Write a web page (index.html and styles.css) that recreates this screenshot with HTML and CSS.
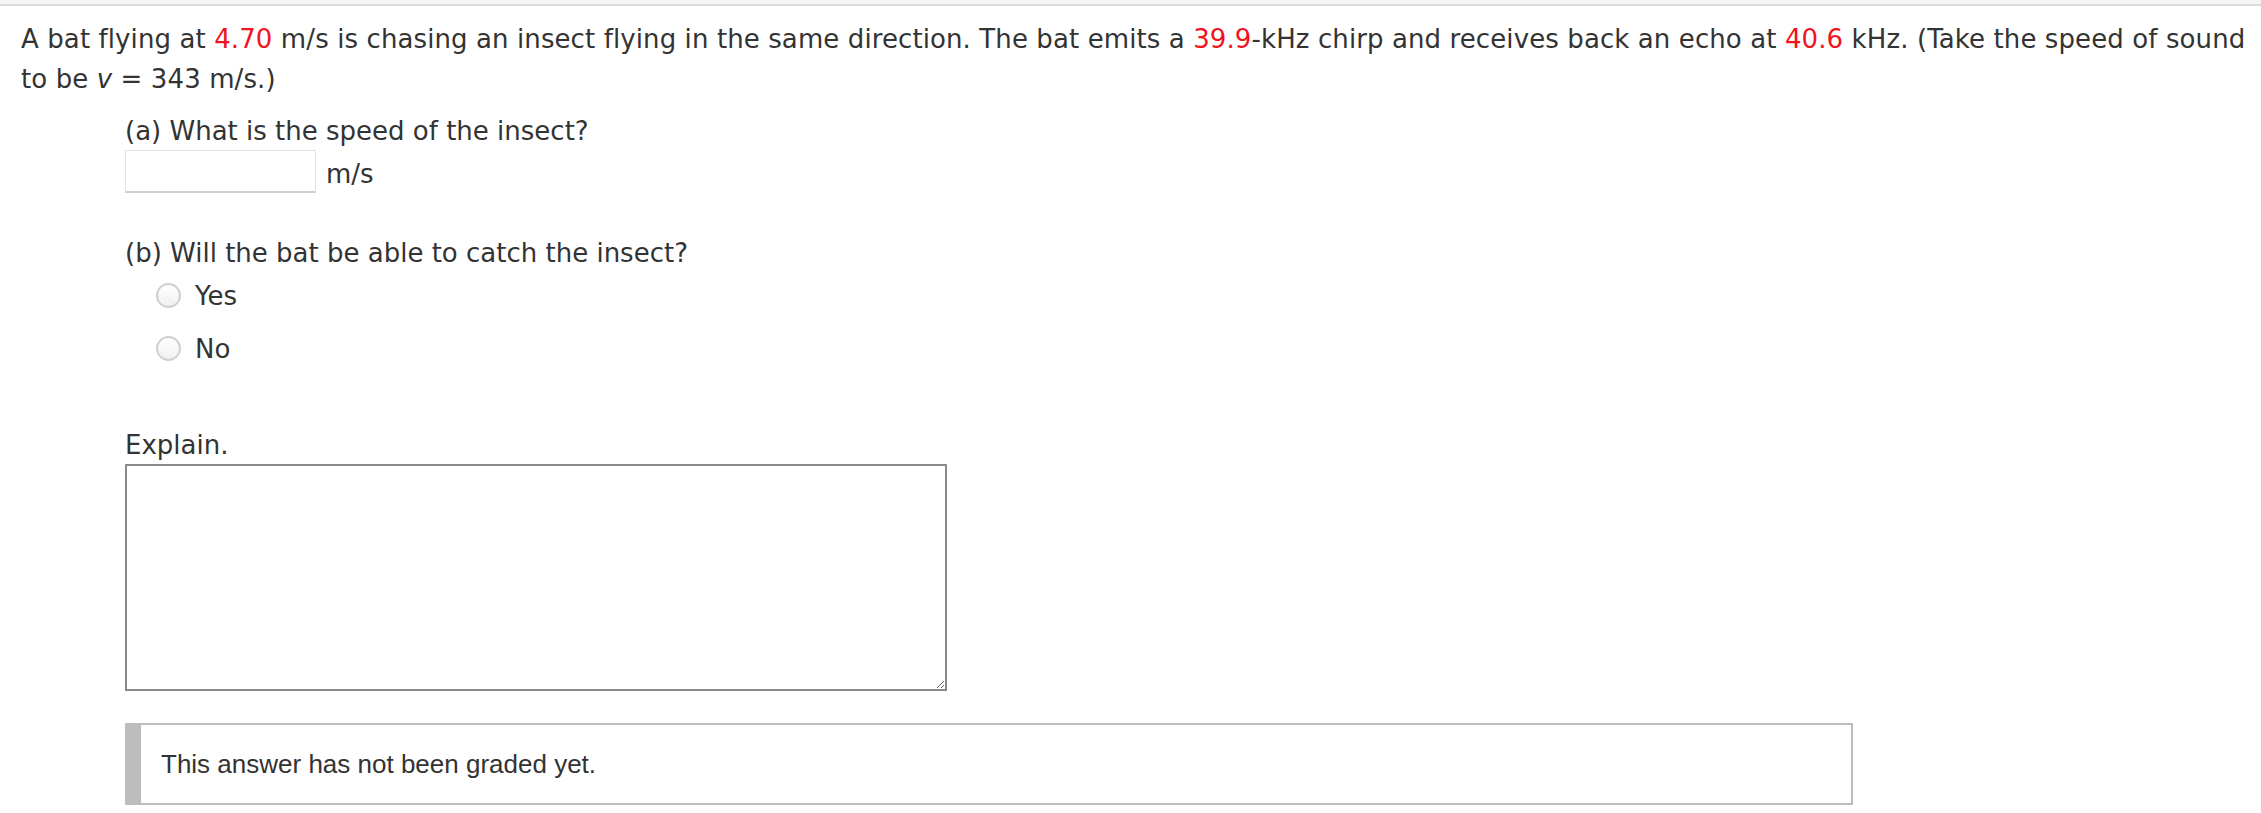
FILE: index.html
```html
<!DOCTYPE html>
<html lang="en">
<head>
    <meta charset="UTF-8">
    <title>Bat and insect - Doppler question</title>
    <link rel="stylesheet" href="styles.css">
</head>
<body>
    <div class="top-strip"></div>

    <div class="question">
        <p class="prompt">A bat flying at <span class="given">4.70</span> m/s is chasing an insect flying in the same direction. The bat emits a <span class="given">39.9</span>-kHz chirp and receives back an echo at <span class="given">40.6</span> kHz. (Take the speed of sound to be <i>v</i> = 343 m/s.)</p>

        <div class="part part-a">
            <div class="part-text">(a) What is the speed of the insect?</div>
            <div class="answer-row">
                <input type="text" class="answer-box">
                <span class="unit">m/s</span>
            </div>
        </div>

        <div class="part part-b">
            <div class="part-text">(b) Will the bat be able to catch the insect?</div>
            <ul class="choices">
                <li><span class="radio"></span>Yes</li>
                <li><span class="radio"></span>No</li>
            </ul>
        </div>

        <div class="part explain">
            <div class="part-text">Explain.</div>
            <textarea class="explain-box"></textarea>
        </div>

        <div class="grading">This answer has not been graded yet.</div>
    </div>
</body>
</html>
```

FILE: styles.css
```css
body {
    margin: 0;
    padding: 0;
    background-color: #fff;
    color: #333;
    font-family: "DejaVu Sans", Verdana, sans-serif;
    font-size: 26px;
}

.top-strip {
    height: 4px;
    background-color: #f4f4f4;
    border-bottom: 2px solid #dcdcdc;
}

.question {
    padding: 0 6px 0 21px;
}

.prompt {
    margin: 0;
    padding-top: 13px;
    line-height: 40px;
    letter-spacing: 0.1px;
}

.given {
    color: #f0141e;
}

.part {
    margin-left: 104px;
}

.part-text {
    line-height: 40px;
}

.part-a {
    margin-top: 12px;
}

.answer-row {
    display: flex;
    align-items: center;
    gap: 10px;
    margin-top: -3px;
}

.answer-box {
    width: 191px;
    height: 43px;
    box-sizing: border-box;
    border: 1px solid #e4e4e4;
    border-bottom: 2px solid #cfcfcf;
    margin: 0;
    padding: 0;
}

.unit {
    line-height: 40px;
    padding-top: 6px;
}

.part-b {
    margin-top: 39px;
}

.choices {
    list-style: none;
    margin: -4px 0 0 0;
    padding: 0 0 0 31px;
}

.choices li {
    display: flex;
    align-items: center;
    height: 53px;
}

.radio {
    width: 25px;
    height: 25px;
    box-sizing: border-box;
    border: 2px solid #d0d0d0;
    border-radius: 50%;
    background: linear-gradient(#ffffff, #f0f0f0);
    margin-right: 14px;
}

.explain {
    margin-top: 51px;
}

.explain .part-text {
    line-height: 38px;
}

.explain-box {
    display: block;
    width: 822px;
    height: 227px;
    box-sizing: border-box;
    border: 2px solid #8a8a8a;
    margin: 0;
    padding: 0;
}

.grading {
    margin: 32px 0 0 104px;
    width: 1728px;
    box-sizing: border-box;
    height: 82px;
    display: flex;
    align-items: center;
    padding-left: 20px;
    border: 2px solid #bdbdbd;
    border-left: 16px solid #bdbdbd;
    font-family: "Liberation Sans", Arial, sans-serif;
    font-size: 26px;
    color: #333;
}
```
